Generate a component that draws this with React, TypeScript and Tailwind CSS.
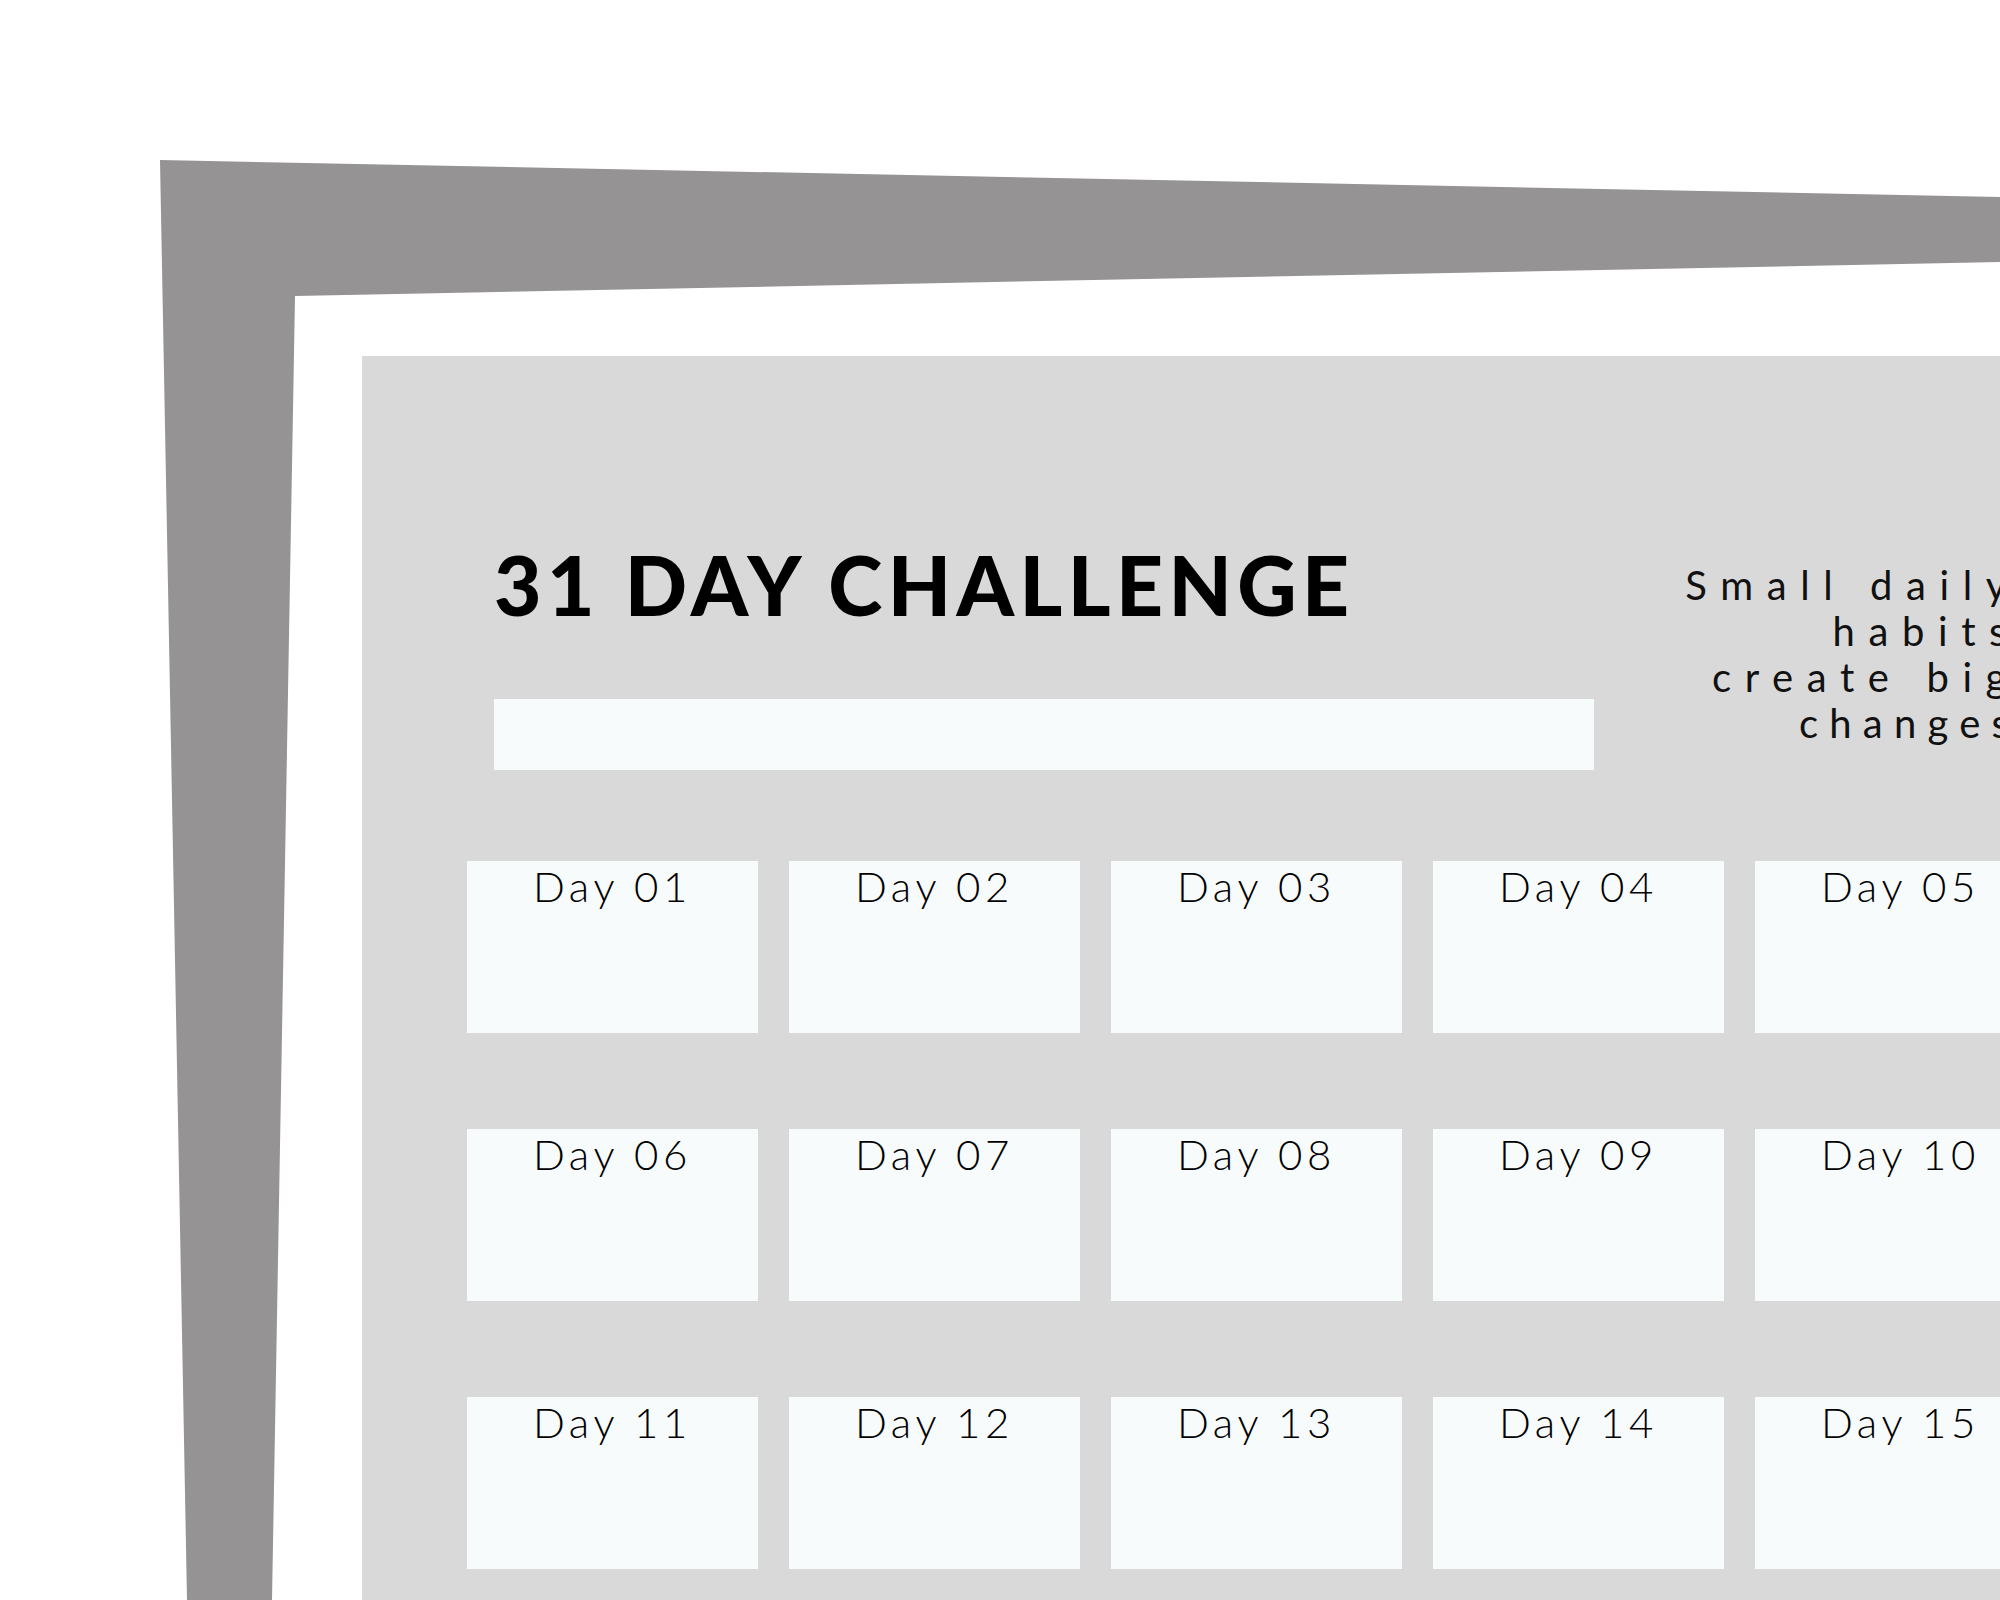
import React from 'react';

const days = Array.from({ length: 31 }, (_, i) => String(i + 1).padStart(2, '0'));

function Frame() {
  // skewed grey photo-frame corner behind the sheet
  return (
    <svg className="absolute inset-0 pointer-events-none" width="2000" height="1600" viewBox="0 0 2000 1600">
      <polygon points="160,160 2000,197 2000,262 295,296 272,1600 187,1600" fill="#959394" />
    </svg>
  );
}

export default function App() {
  return (
    <div
      className="relative w-[2000px] h-[1600px] overflow-hidden bg-white flex"
      style={{ fontFamily: 'Lato, "Open Sans", sans-serif' }}
    >
      <Frame />

      {/* Sheet */}
      <div className="relative flex-1 mt-[356px] ml-[362px] bg-[#d9d9d9] pl-[105px] pt-[187px] overflow-hidden">
        <div className="ml-[27px] w-[1526px] flex items-start justify-between">
          <div className="w-[1100px] flex flex-col">
            <h1 className="text-[82px] leading-none font-black tracking-[0.066em] text-black whitespace-nowrap">
              31 DAY CHALLENGE
            </h1>
            <div className="mt-[74px] h-[71px] w-full bg-[#f8fbfc]" />
          </div>
          <p className="mt-[19px] w-[380px] text-right text-[40px] leading-[46px] tracking-[0.34em] text-[#111] whitespace-nowrap">
            Small daily
            <br />
            habits
            <br />
            create big
            <br />
            <span className="tracking-[0.28em]">changes</span>
          </p>
        </div>

        <div className="mt-[91px] grid grid-cols-[repeat(5,291px)] gap-x-[31px] gap-y-[96px]">
          {days.map(d => (
            <div key={d} className="h-[172px] bg-[#f8fbfc] flex justify-center pt-[4px]">
              <span className="text-[42px] leading-none font-light tracking-[0.11em] text-black">Day {d}</span>
            </div>
          ))}
        </div>
      </div>
    </div>
  );
}
